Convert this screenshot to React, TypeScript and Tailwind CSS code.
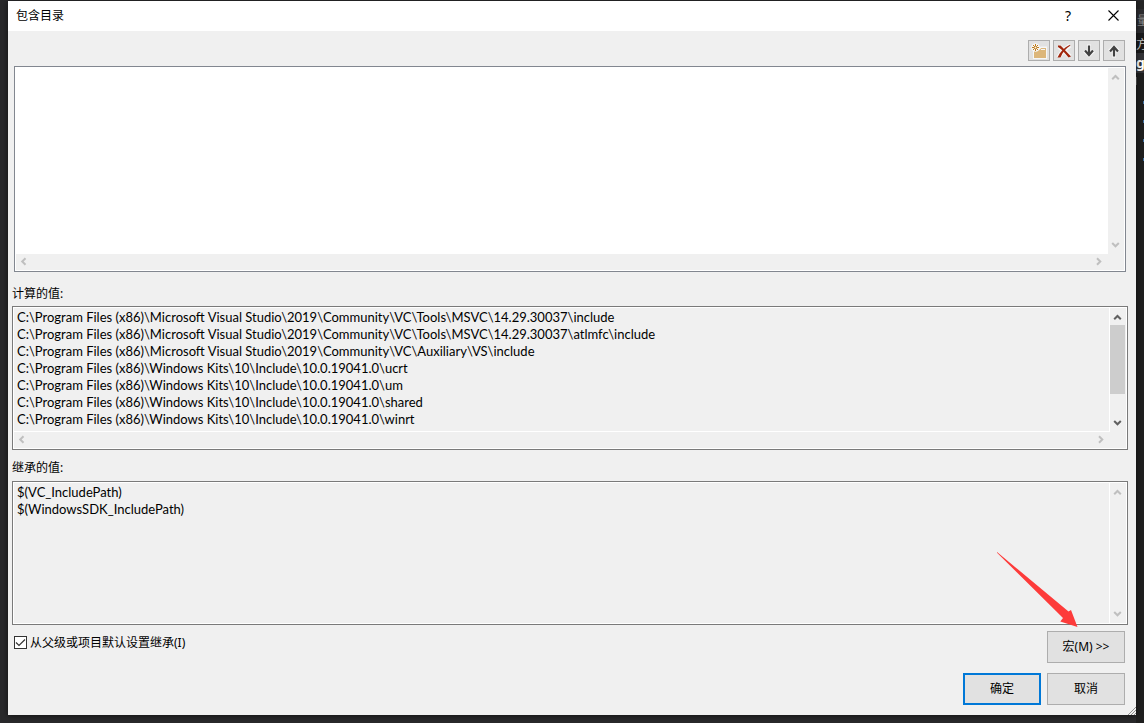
import type { ReactNode } from 'react';

const COMPUTED_VALUES = [
  'C:\\Program Files (x86)\\Microsoft Visual Studio\\2019\\Community\\VC\\Tools\\MSVC\\14.29.30037\\include',
  'C:\\Program Files (x86)\\Microsoft Visual Studio\\2019\\Community\\VC\\Tools\\MSVC\\14.29.30037\\atlmfc\\include',
  'C:\\Program Files (x86)\\Microsoft Visual Studio\\2019\\Community\\VC\\Auxiliary\\VS\\include',
  'C:\\Program Files (x86)\\Windows Kits\\10\\Include\\10.0.19041.0\\ucrt',
  'C:\\Program Files (x86)\\Windows Kits\\10\\Include\\10.0.19041.0\\um',
  'C:\\Program Files (x86)\\Windows Kits\\10\\Include\\10.0.19041.0\\shared',
  'C:\\Program Files (x86)\\Windows Kits\\10\\Include\\10.0.19041.0\\winrt',
];

const INHERITED_VALUES = ['$(VC_IncludePath)', '$(WindowsSDK_IncludePath)'];

type Direction = 'up' | 'down' | 'left' | 'right';

const CHEVRONS: Record<Direction, string> = {
  up: 'M.2 6.300 3.500 3 6.800 6.300',
  down: 'M.2 2 3.500 5.300 6.800 2',
  left: 'M5.500 .2 2.200 3.500 5.500 6.800',
  right: 'M2 .2 5.300 3.500 2 6.800',
};

const ScrollButton = ({
  direction,
  active = false,
}: {
  direction: Direction;
  active?: boolean;
}) => (
  <button
    type="button"
    aria-label={direction}
    disabled={!active}
    className={`flex h-4 w-4 items-center justify-center ${
      active ? 'text-[#606060]' : 'text-[#bfbfbf]'
    }`}
  >
    <svg
      className="h-2 w-2 overflow-visible"
      viewBox="0 0 8 8"
      fill="none"
      stroke="currentColor"
      strokeWidth={2}
    >
      <path d={CHEVRONS[direction]} />
    </svg>
  </button>
);

const VerticalBar = ({ children }: { children?: ReactNode }) => (
  <div className="flex w-4 flex-col justify-between bg-[#f0f0f0] py-px">
    {children}
  </div>
);

const HorizontalBar = () => (
  <div className="flex h-4 items-center justify-between bg-[#f0f0f0] pr-px">
    <ScrollButton direction="left" />
    <ScrollButton direction="right" />
  </div>
);

const ToolButton = ({
  label,
  children,
}: {
  label: string;
  children: ReactNode;
}) => (
  <button
    type="button"
    aria-label={label}
    className="h-[21px] w-[22px] border border-[#adadad] bg-[#e1e1e1]"
  >
    <svg className="h-[19px] w-5" viewBox="0 0 20 19" fill="none">
      {children}
    </svg>
  </button>
);

const ReadOnlyText = ({ id, lines }: { id: string; lines: string[] }) => (
  <textarea
    id={id}
    readOnly
    wrap="off"
    value={lines.join('\n')}
    className="block min-w-0 flex-1 resize-none overflow-hidden px-[3px] pt-px font-[Lato,sans-serif] text-[13px] leading-[17px] outline-none"
  />
);

/**
 * Slice of the IDE window that stays visible to the right of the dialog
 */
const EditorSliver = () => (
  <div
    aria-hidden="true"
    className="flex w-2 shrink-0 flex-col overflow-hidden bg-[#1f1f1f] whitespace-nowrap"
  >
    <div className="h-2 bg-[#252526]" />
    <div className="h-6 bg-[#2d2d30] pl-px leading-6 text-[#8a8a8a]">量</div>
    <div className="h-5 bg-[#1b1b1c] leading-6 text-[#c8c8c8]">方</div>
    <div className="h-5 bg-[#333337] text-sm leading-5 font-bold text-white">
      g
    </div>
    <div className="mt-1 h-2 w-px bg-[#5a5a5a]" />
    <div className="mt-4 flex flex-col items-end gap-4">
      <div className="h-[3px] w-px bg-[#3f6f9f]" />
      <div className="h-[3px] w-px bg-[#3f6f9f]" />
      <div className="h-[3px] w-px bg-[#3f6f9f]" />
      <div className="h-[3px] w-px bg-[#3f6f9f]" />
    </div>
  </div>
);

const App = () => {
  return (
    <div className="flex min-h-screen bg-[#29292b] pt-px pl-2 font-['Noto_Sans','Noto_Sans_CJK_SC',sans-serif] text-xs text-black">
      <div
        role="dialog"
        aria-labelledby="dialog-title"
        className="relative mb-2 flex min-w-0 flex-1 flex-col bg-[#f0f0f0] shadow-[0_1px_6px_rgba(0,0,0,0.6)]"
      >
        <header className="flex h-[30px] shrink-0 bg-white pl-2 leading-[30px]">
          <h1 id="dialog-title" className="flex-1">
            包含目录
          </h1>
          <button type="button" className="w-11 text-sm leading-7">
            ?
          </button>
          <button
            type="button"
            aria-label="关闭"
            className="flex w-[46px] justify-center pt-[9px]"
          >
            <svg
              className="h-[11px] w-[11px]"
              viewBox="0 0 11 11"
              stroke="currentColor"
              strokeWidth={1.1}
            >
              <path d="M.5.5l10 10M10.5.5l-10 10" />
            </svg>
          </button>
        </header>

        <div className="flex justify-end gap-[3px] px-[11px] pt-[9px] pb-[5px]">
          <ToolButton label="新行">
            <path d="M4 7h6.500l1-1.500H18V18H4z" fill="#f6f6f6" />
            <path d="M5 8.500h6l1-1.500h5v10H5z" fill="#dcb67a" />
            <path d="M12 8.500h4" stroke="#f6f6f6" />
            <circle cx="6.500" cy="6.500" r="4.300" fill="#f6f6f6" />
            <path
              d="M6.500 3v7M3 6.500h7M4 4l5 5M9 4 4 9"
              stroke="#c27d1a"
            />
            <circle cx="6.500" cy="6.500" r="1" fill="#f6f6f6" />
          </ToolButton>
          <ToolButton label="删除">
            <path
              d="M4.500 5.500C9 8 12 12 16 15.500M16 4.500C11 8 7 12 4.500 16.500"
              stroke="#f6f6f6"
              strokeWidth={4.5}
            />
            <path
              d="M4 4.500 6.500 4.500C10 7.500 13 11.500 17 15.500L14.500 16.500C11.500 13 8.500 8.500 4 6z"
              fill="#a1260d"
            />
            <path
              d="M16.500 4.500C12 7 8.500 11 6.500 16.500H3.500C6 11 10 6.500 15.500 4z"
              fill="#a1260d"
            />
          </ToolButton>
          <ToolButton label="下移">
            <path d="M10 3.500V15M5.500 9.500 10 14l4.500-4.500" stroke="#f6f6f6" strokeWidth={4} />
            <path d="M10 4.500V14M6 9.500l4 4.500 4-4.500" stroke="#424242" strokeWidth={2.2} />
          </ToolButton>
          <ToolButton label="上移">
            <path d="M10 16.500V6M5.500 10.500 10 6l4.500 4.500" stroke="#f6f6f6" strokeWidth={4} />
            <path d="M10 15.500V6M6 10.500 10 6l4 4.500" stroke="#424242" strokeWidth={2.2} />
          </ToolButton>
        </div>

        <div className="mr-[10px] ml-[6px] flex min-h-40 flex-1 flex-col border border-[#828790] bg-white p-px">
          <div className="flex flex-1">
            <textarea
              aria-label="包含目录"
              className="block min-w-0 flex-1 resize-none px-[3px] leading-[17px] outline-none"
            />
            <VerticalBar>
              <ScrollButton direction="up" />
              <ScrollButton direction="down" />
            </VerticalBar>
          </div>
          <div className="bg-[#f0f0f0] pr-4">
            <HorizontalBar />
          </div>
        </div>

        <div className="pr-2 pl-1">
          <label htmlFor="computed" className="block pt-[13px] pb-1 leading-[17px]">
            计算的值:
          </label>
          <div className="flex h-36 flex-col border border-[#7a7a7a]">
            <div className="flex flex-1 flex-col border border-white">
              <div className="flex flex-1">
                <div className="flex min-w-0 flex-1 border-r border-b border-white">
                  <ReadOnlyText id="computed" lines={COMPUTED_VALUES} />
                </div>
                <VerticalBar>
                  <ScrollButton direction="up" active />
                  <div className="mb-auto h-[69px] w-[15px] bg-[#cdcdcd]" />
                  <ScrollButton direction="down" active />
                </VerticalBar>
              </div>
              <div className="pr-4">
                <HorizontalBar />
              </div>
            </div>
          </div>

          <label htmlFor="inherited" className="block pt-[9px] pb-[5px] leading-[17px]">
            继承的值:
          </label>
          <div className="flex h-36 flex-col border border-[#7a7a7a]">
            <div className="flex flex-1 border border-white">
              <div className="flex min-w-0 flex-1 border-r border-white">
                <ReadOnlyText id="inherited" lines={INHERITED_VALUES} />
              </div>
              <VerticalBar>
                <ScrollButton direction="up" />
                <ScrollButton direction="down" />
              </VerticalBar>
            </div>
          </div>
        </div>

        <div className="flex items-start justify-between pt-[6px] pr-[11px] pl-[6px]">
          <label className="flex items-center gap-[3px] pt-[3px] leading-[17px]">
            <span className="grid">
              <input
                type="checkbox"
                defaultChecked
                className="peer col-start-1 row-start-1 h-[13px] w-[13px] appearance-none border border-[#333333] bg-white"
              />
              <svg
                className="pointer-events-none invisible col-start-1 row-start-1 h-[13px] w-[13px] peer-checked:visible"
                viewBox="0 0 13 13"
                fill="none"
                stroke="#333333"
              >
                <path d="M2 6.500l3 3 6-6" strokeWidth={1.2} />
              </svg>
            </span>
            从父级或项目默认设置继承(I)
          </label>
          <button
            type="button"
            className="h-8 w-[78px] border border-[#adadad] bg-[#e1e1e1]"
          >
            宏(M) &gt;&gt;
          </button>
        </div>

        <footer className="flex justify-end gap-[6px] pt-[10px] pr-[11px] pb-[10px]">
          <button
            type="button"
            className="h-8 w-[78px] border-2 border-[#0078d7] bg-[#e1e1e1]"
          >
            确定
          </button>
          <button
            type="button"
            className="h-8 w-[78px] border border-[#adadad] bg-[#e1e1e1]"
          >
            取消
          </button>
        </footer>

        {/* Resize grip */}
        <svg
          className="absolute right-0 bottom-0 h-2 w-2"
          viewBox="0 0 8 8"
          stroke="#8f8f8f"
        >
          <path d="M0 8l8-8M3 8l5-5M6 8l2-2" />
        </svg>

        {/* Pointer to the macro button */}
        <svg
          className="pointer-events-none absolute right-[57px] bottom-[87px] h-[76px] w-[82px]"
          viewBox="0 0 82 76"
          fill="#fd3b3a"
        >
          <path d="M0 0 71.500 59.500 74 58 80.500 75 63.300 69.500 66 66 0 .8z" />
        </svg>
      </div>
      <EditorSliver />
    </div>
  );
};

export default App;
